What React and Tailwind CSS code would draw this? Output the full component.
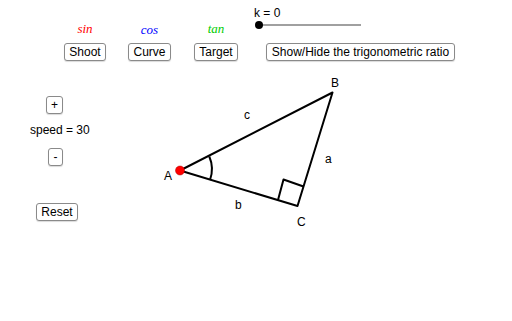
import React from "react";

const btn =
  "h-[18px] px-[4px] bg-white border border-[#8a8a8a] rounded-[3px] text-[12px] leading-[16px] text-black font-['Liberation_Sans',Arial,sans-serif] shadow-[0_1px_1px_rgba(0,0,0,0.15)]";
const fn = "text-[13px] leading-[16px] italic font-['Liberation_Serif',serif]";

const App = () => {
  return (
    <div className="relative w-[512px] h-[321px] bg-white overflow-hidden font-['Liberation_Sans',Arial,sans-serif] text-black">
      {/* top controls */}
      <div className="absolute left-[64px] top-[5px] flex items-end">
        <div className="flex flex-col items-center gap-[6px] w-[42px]">
          <span className={`${fn} text-[#ff0000]`}>sin</span>
          <button className={`${btn} w-[42px]`}>Shoot</button>
        </div>
        <div className="flex flex-col items-center gap-[5px] w-[43px] ml-[22px]">
          <span className={`${fn} text-[#0000ff]`}>cos</span>
          <button className={`${btn} w-[43px]`}>Curve</button>
        </div>
        <div className="flex flex-col items-center gap-[6px] w-[44px] ml-[23px]">
          <span className={`${fn} text-[#00cc00]`}>tan</span>
          <button className={`${btn} w-[44px]`}>Target</button>
        </div>
        <div className="flex flex-col ml-[28px]">
          <div className="flex flex-col -ml-[12px] h-[38px] pt-[1px]">
            <span className="text-[12px] leading-[14px]">k = 0</span>
            <div className="relative w-[107px] h-[8px] mt-[1px] flex items-center">
              <div className="ml-[3px] w-[104px] h-[2px] bg-[#a0a0a0]" />
              <div className="absolute left-[1px] top-0 w-[8px] h-[8px] rounded-full bg-black" />
            </div>
          </div>
          <button className={`${btn} w-[189px]`}>Show/Hide the trigonometric ratio</button>
        </div>
      </div>

      {/* speed controls */}
      <div className="absolute left-[30px] top-[96px] flex flex-col items-start">
        <button className={`${btn} w-[17px] px-0 ml-[16px]`}>+</button>
        <span className="text-[12px] leading-[14px] mt-[9px]">speed = 30</span>
        <button className={`${btn} w-[15px] px-0 ml-[18px] mt-[11px]`}>-</button>
        <button className={`${btn} w-[42px] ml-[6px] mt-[37px]`}>Reset</button>
      </div>

      {/* triangle */}
      <svg className="absolute left-0 top-0" width="512" height="321">
        <g stroke="black" strokeWidth="2" fill="none" strokeLinejoin="round">
          <polygon points="180,170.5 332.5,92.5 297.5,206" />
          <polyline points="278,200 283.5,179.5 303.5,186.5" />
          <path d="M 209.3 156.5 A 32 32 0 0 1 210 180" />
        </g>
        <circle cx="180" cy="170.5" r="4.5" fill="#ff0000" stroke="#b00000" strokeWidth="0.5" />
        <g fontFamily="Liberation Sans, Arial, sans-serif" fontSize="12" fill="black">
          <text x="331" y="87">B</text>
          <text x="244" y="119">c</text>
          <text x="325" y="163">a</text>
          <text x="235" y="209">b</text>
          <text x="297" y="226">C</text>
          <text x="164" y="180">A</text>
        </g>
      </svg>
    </div>
  );
};

export default App;
